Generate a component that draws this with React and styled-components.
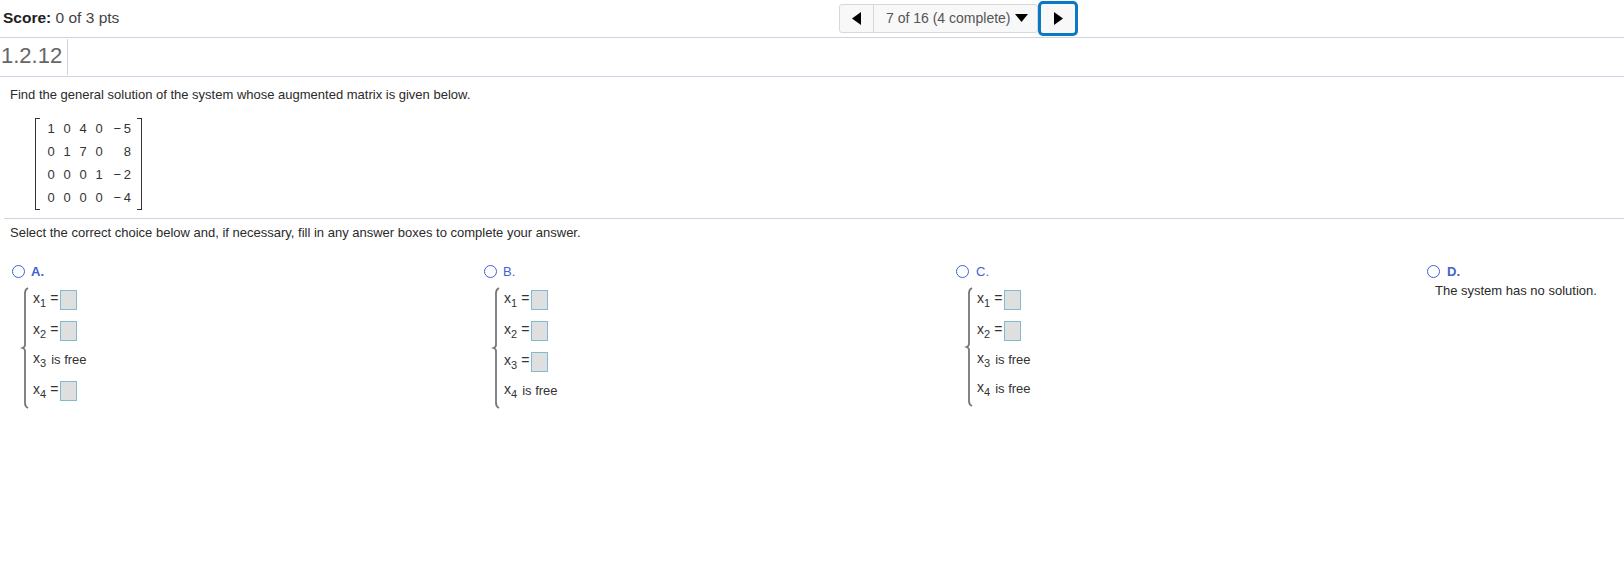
import React from 'react';
import styled, { createGlobalStyle } from 'styled-components';

const GlobalStyle = createGlobalStyle`
  html, body {
    margin: 0;
    padding: 0;
    background: #fff;
    font-family: "Liberation Sans", Arial, sans-serif;
    color: #333;
  }
`;

const matrix = [
  [1, 0, 4, 0, '\u2212 5'],
  [0, 1, 7, 0, '8'],
  [0, 0, 0, 1, '\u2212 2'],
  [0, 0, 0, 0, '\u2212 4'],
];

const choices = [
  { letter: 'A.', bold: true, headPad: 1, indent: 9, rows: [true, true, false, true] },
  { letter: 'B.', bold: false, headPad: 0, indent: 7, rows: [true, true, true, false] },
  { letter: 'C.', bold: false, headPad: 0, gap: 7, indent: 8, rows: [true, true, false, false] },
];

const INPUT_ROW = 31;
const FREE_ROW = 29;

const Brace = ({ height }) => {
  const mid = height / 2;
  return (
    <BraceSvg viewBox={`0 0 10 ${height}`} width="10" height={height}>
      <path
        d={`M8 1 C6 2 5 3.5 5 6 L5 ${mid - 3} C5 ${mid - 1.5} 4 ${mid - 0.5} 2.5 ${mid} C4 ${mid + 0.5} 5 ${mid + 1.5} 5 ${mid + 3} L5 ${height - 6} C5 ${height - 3.5} 6 ${height - 2} 8 ${height - 1}`}
        fill="none"
        stroke="#777"
        strokeWidth="1.8"
      />
    </BraceSvg>
  );
};

const Row = ({ n, input }) => (
  <EqRow $input={input}>
    <Var>x<sub>{n}</sub></Var>
    {input ? <><Eq>=</Eq><AnswerBox /></> : <Free>is free</Free>}
  </EqRow>
);

export default function App() {
  return (
    <Page>
      <GlobalStyle />
      <Header>
        <Score><b>Score:</b> 0 of 3 pts</Score>
        <Nav>
          <NavGroup>
            <PrevBtn>
              <svg width="9" height="13" viewBox="0 0 9 13"><path d="M9 0 L9 13 L0 6.5 Z" fill="#000" /></svg>
            </PrevBtn>
            <Progress>
              7 of 16 (4 complete)
              <svg width="13" height="8" viewBox="0 0 13 8"><path d="M0 0 L13 0 L6.5 8 Z" fill="#000" /></svg>
            </Progress>
          </NavGroup>
          <NextBtn>
            <svg width="9" height="13" viewBox="0 0 9 13"><path d="M0 0 L0 13 L9 6.5 Z" fill="#000" /></svg>
          </NextBtn>
        </Nav>
      </Header>
      <TitleBar>
        <Title>1.2.12</Title>
      </TitleBar>
      <Question>
        <Prompt>Find the general solution of the system whose augmented matrix is given below.</Prompt>
        <Matrix>
          {matrix.map((row, i) => (
            <MatrixRow key={i}>
              {row.slice(0, 4).map((v, j) => <Cell key={j}>{v}</Cell>)}
              <LastCell>{row[4]}</LastCell>
            </MatrixRow>
          ))}
        </Matrix>
      </Question>
      <Answers>
        <Prompt>Select the correct choice below and, if necessary, fill in any answer boxes to complete your answer.</Prompt>
        <Choices>
          {choices.map((c) => (
            <Choice key={c.letter}>
              <ChoiceHead $pad={c.headPad} $gap={c.gap}>
                <Radio />
                <Letter $bold={c.bold}>{c.letter}</Letter>
              </ChoiceHead>
              <System $indent={c.indent}>
                <Brace height={c.rows.reduce((sum, input) => sum + (input ? INPUT_ROW : FREE_ROW), 0)} />
                <Rows>
                  {c.rows.map((input, i) => <Row key={i} n={i + 1} input={input} />)}
                </Rows>
              </System>
            </Choice>
          ))}
          <Choice>
            <ChoiceHead $gap={7}>
              <Radio />
              <Letter $bold>D.</Letter>
            </ChoiceHead>
            <NoSolution>The system has no solution.</NoSolution>
          </Choice>
        </Choices>
      </Answers>
    </Page>
  );
}

const Page = styled.div`
  width: 1624px;
  height: 568px;
  overflow: hidden;
`;

const Header = styled.div`
  display: flex;
  align-items: center;
  justify-content: space-between;
  height: 38px;
  padding: 0 546px 1px 3px;
  box-sizing: border-box;
  border-bottom: 1px solid #cdd3e0;
`;

const Score = styled.div`
  font-size: 15.5px;
  color: #444;
  b { color: #222; }
`;

const Nav = styled.div`
  display: flex;
  align-items: center;
`;

const NavGroup = styled.div`
  display: flex;
  align-items: stretch;
  width: 199px;
  height: 29px;
  border: 1px solid #d8d8d8;
  border-radius: 3px;
  background: #f8f8f8;
  box-sizing: border-box;
`;

const PrevBtn = styled.div`
  display: flex;
  align-items: center;
  justify-content: center;
  width: 33px;
  border-right: 1px solid #d8d8d8;
`;

const Progress = styled.div`
  display: flex;
  align-items: center;
  gap: 4px;
  padding-left: 12px;
  font-size: 14px;
  color: #555;
`;

const NextBtn = styled.div`
  display: flex;
  align-items: center;
  justify-content: center;
  width: 40px;
  height: 35px;
  box-sizing: border-box;
  background: #f8f8f8;
  border: 3px solid #0a78c2;
  border-radius: 5px;
`;

const TitleBar = styled.div`
  height: 39px;
  box-sizing: border-box;
  padding-top: 1px;
  border-bottom: 1px solid #cdd3e0;
`;

const Title = styled.div`
  display: inline-block;
  height: 36px;
  line-height: 34px;
  padding: 0 5px 0 1px;
  font-size: 22px;
  color: #666;
  border-right: 1px solid #cdd3e0;
`;

const Question = styled.div`
  height: 142px;
  box-sizing: border-box;
  margin-left: 4px;
  padding: 10px 0 0 6px;
  border-bottom: 1px solid #cdd3e0;
`;

const Prompt = styled.div`
  font-size: 13px;
  line-height: 16px;
  color: #2a2a2a;
`;

const Matrix = styled.div`
  display: flex;
  flex-direction: column;
  justify-content: center;
  position: relative;
  width: 107px;
  height: 92px;
  box-sizing: border-box;
  margin: 15px 0 0 25px;
  padding: 0 0 2px 8px;
  &::before, &::after {
    content: '';
    position: absolute;
    top: 0;
    bottom: 0;
    width: 4px;
    border: solid #333;
    border-width: 1.5px 0;
  }
  &::before { left: 0; border-left-width: 1.5px; }
  &::after { right: 0; border-right-width: 1.5px; }
`;

const MatrixRow = styled.div`
  display: flex;
  font-size: 13px;
  line-height: 23px;
  color: #333;
`;

const Cell = styled.span`
  width: 16px;
  text-align: center;
`;

const LastCell = styled.span`
  width: 24px;
  text-align: right;
  word-spacing: -1px;
`;

const Answers = styled.div`
  padding: 6px 0 0 10px;
`;

const Choices = styled.div`
  display: grid;
  grid-template-columns: 473px 472px 471px 1fr;
  margin: 22px 0 0 1px;
`;

const Choice = styled.div`
  display: flex;
  flex-direction: column;
`;

const ChoiceHead = styled.div`
  display: flex;
  align-items: center;
  gap: ${(p) => p.$gap || 6}px;
  height: 16px;
  padding-left: ${(p) => p.$pad || 0}px;
`;

const Radio = styled.span`
  width: 13px;
  height: 13px;
  box-sizing: border-box;
  border: 1.5px solid #3f62d4;
  border-radius: 50%;
`;

const Letter = styled.span`
  font-size: 13px;
  font-weight: ${(p) => (p.$bold ? 'bold' : 'normal')};
  color: #3f62d4;
`;

const System = styled.div`
  display: flex;
  align-items: flex-start;
  gap: 3px;
  margin: 5px 0 0 ${(p) => p.$indent}px;
`;

const BraceSvg = styled.svg`
  flex: none;
  margin-top: 3px;
`;

const Rows = styled.div`
  display: flex;
  flex-direction: column;
`;

const EqRow = styled.div`
  display: flex;
  align-items: center;
  height: ${(p) => (p.$input ? INPUT_ROW : FREE_ROW)}px;
  box-sizing: border-box;
  padding-bottom: ${(p) => (p.$input ? 0 : 2)}px;
  font-size: 13px;
  color: #333;
`;

const Var = styled.span`
  font-size: 14px;
  line-height: 16px;
  margin-bottom: 3px;
  sub { font-size: 11px; line-height: 0; }
`;

const Eq = styled.span`
  margin: 0 2px 3px 4px;
  font-size: 14px;
`;

const Free = styled.span`
  margin-left: 5px;
`;

const AnswerBox = styled.span`
  width: 17px;
  height: 20px;
  box-sizing: border-box;
  background: #dfdfdf;
  border: 1px solid #7fbcd2;
`;

const NoSolution = styled.div`
  margin: 4px 0 0 8px;
  font-size: 13px;
  line-height: 16px;
  color: #2a2a2a;
`;
